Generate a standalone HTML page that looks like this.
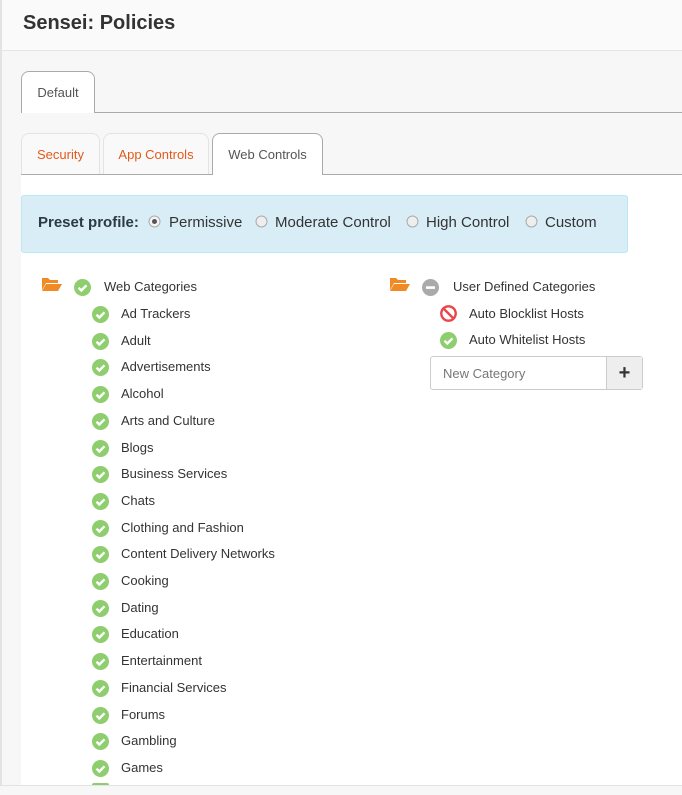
<!DOCTYPE html>
<html style="overflow:hidden;height:795px"><head><style>
*{box-sizing:border-box;margin:0;padding:0}
body{width:682px;height:795px;overflow:hidden;background:#f7f7f7;font-family:"Liberation Sans",sans-serif;color:#333;position:relative}
.a{position:absolute}
.hdr{left:0;top:0;width:682px;height:51px;background:#fafafa;border-bottom:1px solid #e6e6e6;border-left:2px solid #e3e3e3}
.hdr h1{position:absolute;left:21px;top:12px;font-size:20px;font-weight:bold;color:#333}
.lb{left:0;top:51px;width:2px;height:744px;background:#e3e3e3}
.tab{position:absolute;border:1px solid #ccc;border-bottom:none;border-radius:8px 8px 0 0;font-size:13px;text-align:center}
.t{font-size:13px;color:#333;position:absolute;white-space:nowrap}
.ic{position:absolute;width:17px;height:17px}
</style></head><body>
<div class="a hdr"><h1>Sensei: Policies</h1></div>
<div class="a lb"></div>
<div class="a" style="left:21px;top:112px;width:661px;height:1px;background:#aaa"></div>
<div class="tab" style="left:21px;top:71px;width:74px;height:42px;background:#fff;border-color:#aaa;line-height:42px;color:#555">Default</div>
<div class="a" style="left:21px;top:174px;width:661px;height:1px;background:#aaa"></div>
<div class="tab" style="left:21px;top:133px;width:79px;height:41px;background:#f9f9f9;border-color:#e3e3e3;line-height:42px;color:#e25a1c">Security</div>
<div class="tab" style="left:103px;top:133px;width:106px;height:41px;background:#f9f9f9;border-color:#e3e3e3;line-height:42px;color:#e25a1c">App Controls</div>
<div class="tab" style="left:212px;top:133px;width:111px;height:42px;background:#fff;border-color:#aaa;line-height:42px;color:#555">Web Controls</div>
<div class="a" style="left:21px;top:175px;width:661px;height:610px;background:#fff"></div>
<div class="a" style="left:21px;top:195px;width:607px;height:58px;background:#d9edf7;border:1px solid #bce8f1;border-radius:3px"></div>
<div class="t" style="left:38px;top:214px;font-size:15px;font-weight:bold;color:#2d3a45">Preset profile:</div>
<svg class="a" style="left:148px;top:215px" width="13" height="13"><circle cx="6.5" cy="6.5" r="5.5" fill="#f4f4f4" stroke="#aaa"/><circle cx="6.5" cy="6.5" r="2.5" fill="#555"/></svg>
<div class="t" style="left:169px;top:214px;font-size:15px">Permissive</div>
<svg class="a" style="left:255px;top:215px" width="13" height="13"><circle cx="6.5" cy="6.5" r="5.5" fill="#eee" stroke="#aaa"/></svg>
<div class="t" style="left:275px;top:214px;font-size:15px">Moderate Control</div>
<svg class="a" style="left:406px;top:215px" width="13" height="13"><circle cx="6.5" cy="6.5" r="5.5" fill="#eee" stroke="#aaa"/></svg>
<div class="t" style="left:426px;top:214px;font-size:15px">High Control</div>
<svg class="a" style="left:525px;top:215px" width="13" height="13"><circle cx="6.5" cy="6.5" r="5.5" fill="#eee" stroke="#aaa"/></svg>
<div class="t" style="left:545px;top:214px;font-size:15px">Custom</div>

<svg class="a" style="left:41px;top:276px" width="22" height="16"><path d="M1 2h6l2 2h8v3H5L1 14z" fill="#f08a24"/><path d="M5 8h16l-4 7H1z" fill="#f08a24"/></svg>
<svg class="ic" style="left:74px;top:279px" viewBox="0 0 17 17"><circle cx="8.5" cy="8.5" r="8.5" fill="#8fce6e"/><path d="M4.5 8.7l2.8 2.8 5.2-5.2" stroke="#fff" stroke-width="2.4" fill="none"/></svg>
<div class="t" style="left:104px;top:279px">Web Categories</div>

<svg class="a" style="left:389px;top:276px" width="22" height="16"><path d="M1 2h6l2 2h8v3H5L1 14z" fill="#f08a24"/><path d="M5 8h16l-4 7H1z" fill="#f08a24"/></svg>
<svg class="ic" style="left:422px;top:279px" viewBox="0 0 17 17"><circle cx="8.5" cy="8.5" r="8.5" fill="#aaa"/><rect x="4" y="7.3" width="9" height="2.6" fill="#fff"/></svg>
<div class="t" style="left:453px;top:279px">User Defined Categories</div>
<svg class="ic" style="left:440px;top:305px" viewBox="0 0 17 17"><circle cx="8.5" cy="8.5" r="7.2" fill="none" stroke="#e8474a" stroke-width="2.4"/><path d="M3.5 3.5l10 10" stroke="#e8474a" stroke-width="2.4"/></svg>
<div class="t" style="left:469px;top:306px">Auto Blocklist Hosts</div>
<svg class="ic" style="left:440px;top:332px" viewBox="0 0 17 17"><circle cx="8.5" cy="8.5" r="8.5" fill="#8fce6e"/><path d="M4.5 8.7l2.8 2.8 5.2-5.2" stroke="#fff" stroke-width="2.4" fill="none"/></svg>
<div class="t" style="left:469px;top:332px">Auto Whitelist Hosts</div>
<div class="a" style="left:430px;top:356px;width:213px;height:34px;border:1px solid #ccc;border-radius:3px;background:#fff"></div>
<div class="a" style="left:606px;top:357px;width:36px;height:32px;background:#eee;border-left:1px solid #ccc;text-align:center;line-height:32px;font-size:20px;font-weight:bold;color:#333">+</div>
<div class="t" style="left:443px;top:366px;color:#777">New Category</div>

<div id="list"></div>
<div class="a" style="left:0;top:785px;width:682px;height:10px;background:#f7f7f7;border-top:1px solid #e3e3e3;z-index:5"></div>
<script>
var items=["Ad Trackers","Adult","Advertisements","Alcohol","Arts and Culture","Blogs","Business Services","Chats","Clothing and Fashion","Content Delivery Networks","Cooking","Dating","Education","Entertainment","Financial Services","Forums","Gambling","Games"];
var h="";
items.forEach(function(s,i){var y=306+i*26.7;
h+='<svg class="ic" style="left:92px;top:'+(y)+'px" viewBox="0 0 17 17"><circle cx="8.5" cy="8.5" r="8.5" fill="#8fce6e"/><path d="M4.5 8.7l2.8 2.8 5.2-5.2" stroke="#fff" stroke-width="2.4" fill="none"/></svg><div class="t" style="left:121px;top:'+y+'px">'+s+'</div>';});
h+='<div class="a" style="left:92px;top:783px;width:17px;height:2px;background:#8fce6e;border-radius:8px 8px 0 0"></div>';
document.getElementById("list").innerHTML=h;
</script>
</body></html>
